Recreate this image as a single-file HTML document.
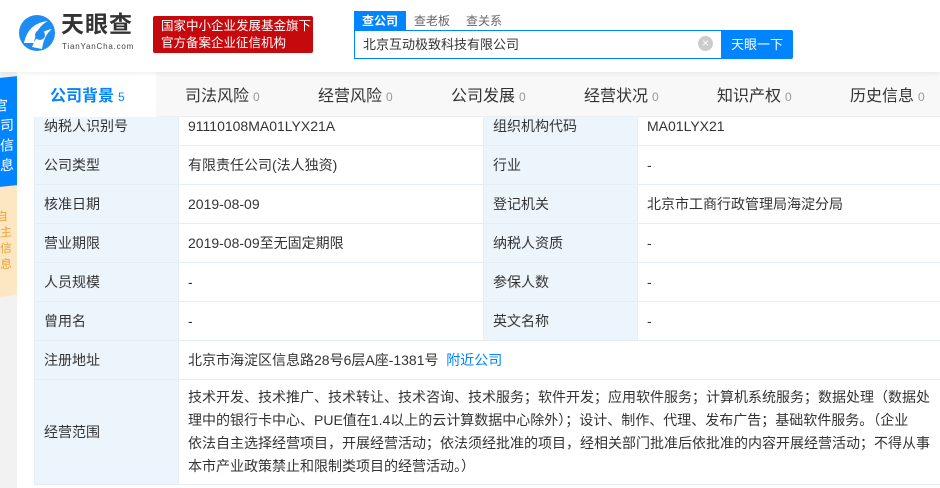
<!DOCTYPE html>
<html><head><meta charset="utf-8"><style>
*{margin:0;padding:0;box-sizing:border-box}
body{width:940px;height:488px;overflow:hidden;background:#fff;font-family:"Liberation Sans","Noto Sans CJK SC",sans-serif;color:#333;position:relative}
.hdr{position:absolute;left:0;top:0;width:940px;height:72px;background:#fff;box-shadow:0 2px 4px rgba(0,0,0,.06);z-index:5}
.logo-t{position:absolute;left:61px;top:10px;font-size:23px;line-height:28px;font-weight:bold;color:#333;letter-spacing:1px}
.logo-s{position:absolute;left:62px;top:42px;font-size:8px;line-height:10px;color:#444;letter-spacing:.8px;white-space:nowrap}
.badge{position:absolute;left:153px;top:16px;width:160px;height:37px;background:#c5090c;border-radius:2px;color:#fff;font-size:12.5px;line-height:17px;padding:2px 0 0 8px;white-space:nowrap}
.stabs{position:absolute;left:354px;top:11px;font-size:12px;color:#666}
.stabs span{display:inline-block;height:20px;line-height:20px;padding:0 8px}
.stabs .on{background:#0084ff;color:#fff;font-weight:bold}
.inp{position:absolute;left:354px;top:30px;width:398px;height:29px;border:1px solid #0084ff;font-size:13px;line-height:27px;padding-left:8px}
.clr{position:absolute;left:698px;top:36px;width:15px;height:15px;border-radius:50%;background:#ccc;color:#fff;font-size:12px;line-height:15px;text-align:center}
.btn{position:absolute;left:721px;top:30px;width:72px;height:29px;background:#0084ff;color:#fff;font-size:13px;line-height:29px;text-align:center;border-radius:0 2px 2px 0}
.side{position:absolute;left:0;top:72px;width:17px;height:416px;background:#f2f2f2}
.sb{position:absolute;left:0;top:77px;width:17px;height:110px;background:#0084ff;transform:skewY(-6deg);color:#fff;font-size:14px;line-height:20px;padding-top:18px;overflow:hidden;text-indent:-6px}
.so{position:absolute;left:0;top:186px;width:17px;height:110px;background:#fde7c2;color:#e8a33c;font-size:12px;line-height:16px;padding-top:22px;transform:skewY(-6deg);text-indent:-4px;overflow:hidden}
.tabbar{position:absolute;left:17px;top:72px;width:923px;height:45px;background:#f8f8f8;z-index:4;border-bottom:1px solid #eee}
.tab{position:absolute;top:0;height:45px;line-height:50px;font-size:16px;color:#333}
.tab i{font-style:normal;font-size:12px;color:#999;margin-left:4px}
.tab.on{background:#fff;color:#0084ff;font-weight:bold}
.tab.on i{color:#0084ff;font-weight:normal}
table{position:absolute;left:34px;top:106px;border-collapse:collapse;font-size:14px;width:920px}
td{border:1px solid #e4eef6;height:39px;padding:0 9px;vertical-align:middle;white-space:nowrap}
td.l{background:#edf5fc;width:144px}
td.v{width:305px}
td.l2{background:#edf5fc;width:154px}
a{color:#0084ff;text-decoration:none}
.sc{line-height:23px;padding-top:6px;padding-bottom:6px}
</style></head><body>
<div class="hdr">
<svg style="position:absolute;left:18px;top:13px" width="38" height="40" viewBox="0 0 38 40"><circle cx="19" cy="20" r="18" fill="#1e8cf0"/><path d="M6 30 Q10 10 30 8 Q18 14 16 30Z" fill="#fff"/><path d="M14 34 Q20 18 34 16 Q26 22 24 36Z" fill="#fff"/><circle cx="22" cy="22" r="5" fill="#1e8cf0"/></svg>
<div class="logo-t">天眼查</div><div class="logo-s">TianYanCha.com</div>
<div class="badge">国家中小企业发展基金旗下<br>官方备案企业征信机构</div>
<div class="stabs"><span class="on">查公司</span><span>查老板</span><span>查关系</span></div>
<div class="inp">北京互动极致科技有限公司</div><div class="clr">×</div>
<div class="btn">天眼一下</div>
</div>
<div class="side"></div>
<div class="sb">官<br>司<br>信<br>息</div>
<div class="so">自<br>主<br>信<br>息</div>
<div class="tabbar">
<div class="tab on" style="left:0;width:139px;padding-left:33px">公司背景<i>5</i></div>
<div class="tab" style="left:168px">司法风险<i>0</i></div>
<div class="tab" style="left:301px">经营风险<i>0</i></div>
<div class="tab" style="left:434px">公司发展<i>0</i></div>
<div class="tab" style="left:567px">经营状况<i>0</i></div>
<div class="tab" style="left:700px">知识产权<i>0</i></div>
<div class="tab" style="left:833px">历史信息<i>0</i></div>
</div>
<table>
<tr><td class="l">纳税人识别号</td><td class="v">91110108MA01LYX21A</td><td class="l2">组织机构代码</td><td>MA01LYX21</td></tr>
<tr><td class="l">公司类型</td><td class="v">有限责任公司(法人独资)</td><td class="l2">行业</td><td>-</td></tr>
<tr><td class="l">核准日期</td><td class="v">2019-08-09</td><td class="l2">登记机关</td><td>北京市工商行政管理局海淀分局</td></tr>
<tr><td class="l">营业期限</td><td class="v">2019-08-09至无固定期限</td><td class="l2">纳税人资质</td><td>-</td></tr>
<tr><td class="l">人员规模</td><td class="v">-</td><td class="l2">参保人数</td><td>-</td></tr>
<tr><td class="l">曾用名</td><td class="v">-</td><td class="l2">英文名称</td><td>-</td></tr>
<tr><td class="l">注册地址</td><td colspan="3">北京市海淀区信息路28号6层A座-1381号 &nbsp;<a>附近公司</a></td></tr>
<tr><td class="l">经营范围</td><td colspan="3" class="sc">技术开发、技术推广、技术转让、技术咨询、技术服务；软件开发；应用软件服务；计算机系统服务；数据处理（数据处<br>理中的银行卡中心、PUE值在1.4以上的云计算数据中心除外）；设计、制作、代理、发布广告；基础软件服务。（企业<br>依法自主选择经营项目，开展经营活动；依法须经批准的项目，经相关部门批准后依批准的内容开展经营活动；不得从事<br>本市产业政策禁止和限制类项目的经营活动。）</td></tr>
</table>
</body></html>
